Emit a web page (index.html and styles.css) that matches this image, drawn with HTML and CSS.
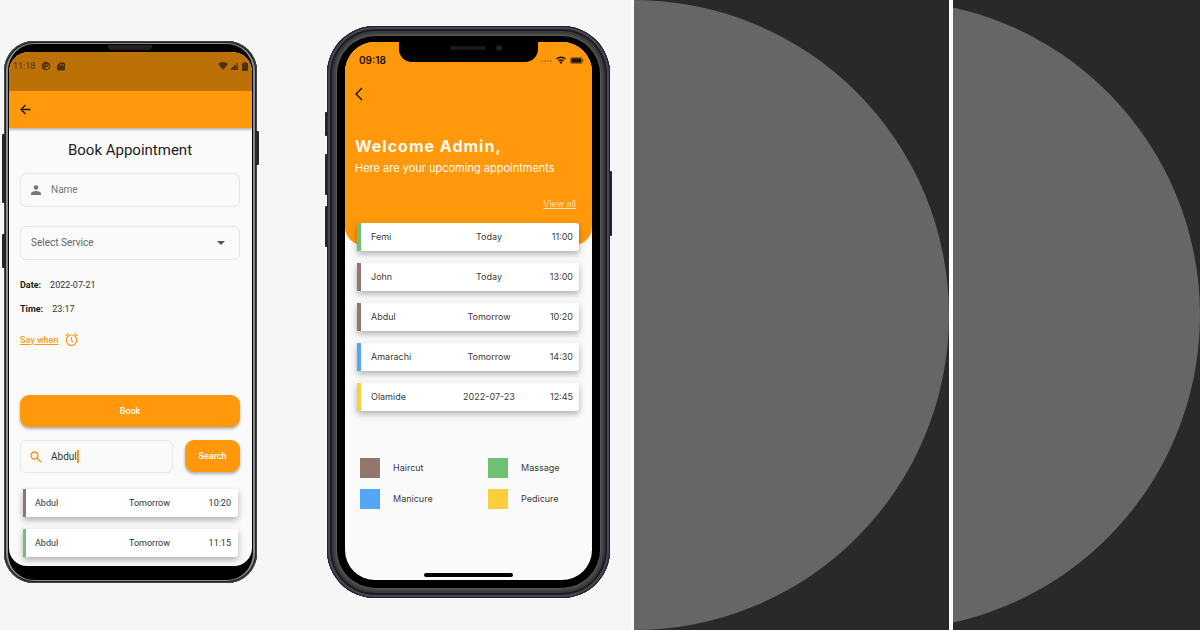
FILE: index.html
```html
<!DOCTYPE html>
<html lang="en">
<head>
<meta charset="utf-8">
<title>Salon booking app</title>
<link rel="stylesheet" href="styles.css">
</head>
<body>
<main class="showcase">
  <section class="devices">
    <div class="android">
      <span class="key key-al1"></span><span class="key key-al2"></span><span class="key key-ar"></span>
      <span class="earpiece"></span>
      <div class="android-screen">
        <div class="android-status">
          <span>11:18</span>
          <svg width="10" height="10" viewBox="0 0 20 20"><circle cx="10" cy="10" r="7.500" fill="none" stroke="#4c3110" stroke-width="2.400"/><path fill="#4c3110" fill-rule="evenodd" d="M5 3h6a4.500 4.500 0 0 1 0 9H9v5L5 15zM9 6v3h2a1.500 1.500 0 0 0 0-3z"/></svg>
          <svg width="8" height="9" viewBox="0 0 16 18"><path fill="#4c3110" fill-rule="evenodd" d="M6 1h8a2 2 0 0 1 2 2v12a2 2 0 0 1-2 2H2a2 2 0 0 1-2-2V7zM6 4v3h1.500V4zm3 0v3h1.500V4zm3 0v3h1.500V4z"/></svg>
          <svg class="push" width="10" height="8" viewBox="0 0 20 16"><path fill="#4c3110" d="M10 16 0 4a15 15 0 0 1 20 0z"/></svg>
          <svg width="8" height="8" viewBox="0 0 16 16"><path fill="#4c3110" opacity=".5" d="M0 16 16 0v16z"/><path fill="#4c3110" d="M0 16 11 5v11zM13 8h3v8h-3z"/></svg>
          <svg width="6" height="9" viewBox="0 0 12 18"><path fill="#4c3110" d="M4 0h4v2h3a1 1 0 0 1 1 1v14a1 1 0 0 1-1 1H1a1 1 0 0 1-1-1V3a1 1 0 0 1 1-1h3z"/></svg>
        </div>
        <div class="appbar">
          <button class="icon-button" aria-label="Back"><svg width="11" height="11" viewBox="0 0 22 22"><path d="M21 11H2M11 2l-9 9 9 9" fill="none" stroke="#24180a" stroke-width="2.600"/></svg></button>
        </div>
        <form class="booking">
          <h1>Book Appointment</h1>
          <label class="field">
            <svg width="10" height="10" viewBox="0 0 20 20"><circle cx="10" cy="5" r="4.600" fill="#777"/><path fill="#777" d="M0 20v-3c0-3 6-5 10-5s10 2 10 5v3z"/></svg>
            <input class="field-input" type="text" placeholder="Name" aria-label="Name">
          </label>
          <div class="field service">
            <select class="field-select" aria-label="Select Service"><option>Select Service</option></select>
            <svg width="8" height="4" viewBox="0 0 8 4"><path fill="#555" d="M0 0h8L4 4z"/></svg>
          </div>
          <p class="fact"><b>Date:</b><span>2022-07-21</span></p>
          <p class="fact"><b>Time:</b><span>23:17</span></p>
          <p class="when"><a href="#when">Say when</a>
            <svg width="13" height="13" viewBox="0 0 26 26" fill="none" stroke="#f79a1c" stroke-width="2.400"><circle cx="13" cy="14.500" r="10.500"/><path d="M13 8v7l4 3M1 6l6-5M25 6l-6-5"/></svg></p>
          <button class="primary" type="button">Book</button>
          <div class="search-row">
            <label class="field search">
              <svg width="12" height="12" viewBox="0 0 24 24" fill="none" stroke="#f2941c" stroke-width="2.800"><circle cx="9" cy="9" r="7"/><path d="m14 14 8.500 8.500"/></svg>
              <input class="field-query" type="text" value="Abdul" size="1" aria-label="Search by name"><span class="caret"></span>
            </label>
            <button class="primary" type="button">Search</button>
          </div>
          <ul class="slots">
            <li class="slot haircut"><span>Abdul</span><span class="day">Tomorrow</span><span class="hour">10:20</span></li>
            <li class="slot massage"><span>Abdul</span><span class="day">Tomorrow</span><span class="hour">11:15</span></li>
          </ul>
        </form>
      </div>
    </div>

    <div class="iphone">
      <span class="key key-il1"></span><span class="key key-il2"></span><span class="key key-il3"></span><span class="key key-ir"></span>
      <div class="iphone-screen">
        <div class="notch"><span class="speaker"></span><span class="lens"></span></div>
        <header class="hero">
          <div class="iphone-status">
            <b>09:18</b>
            <svg class="push" width="11" height="3" viewBox="0 0 11 3"><path stroke="#b97516" stroke-width="1.500" stroke-dasharray="2 1" d="M0 2h11"/></svg>
            <svg width="10" height="8" viewBox="0 0 20 16" fill="none" stroke="#1c1206" stroke-width="3"><path d="M1 6a13 13 0 0 1 18 0M5 10a8 8 0 0 1 10 0"/><path fill="#1c1206" stroke="none" d="m10 16-3-3.500a4 4 0 0 1 6 0z"/></svg>
            <svg width="14" height="7" viewBox="0 0 28 14"><rect x=".8" y=".8" width="24" height="12.400" rx="3" fill="none" stroke="#7d4d0c" stroke-width="1.500"/><rect x="2.500" y="2.500" width="20.500" height="9" rx="1.500" fill="#1c1206"/><path fill="#7d4d0c" d="M26 5c2 0 2 4 0 4z"/></svg>
          </div>
          <button class="icon-button" aria-label="Back"><svg width="8" height="14" viewBox="0 0 8 14"><path d="M7 1 1 7l6 6" fill="none" stroke="#24180a" stroke-width="1.500"/></svg></button>
          <h2>Welcome Admin,</h2>
          <p>Here are your upcoming appointments</p>
          <a class="view-all" href="#all">View all</a>
        </header>
        <ul class="slots upcoming">
          <li class="slot massage"><span>Femi</span><span class="day">Today</span><span class="hour">11:00</span></li>
          <li class="slot haircut"><span>John</span><span class="day">Today</span><span class="hour">13:00</span></li>
          <li class="slot haircut"><span>Abdul</span><span class="day">Tomorrow</span><span class="hour">10:20</span></li>
          <li class="slot manicure"><span>Amarachi</span><span class="day">Tomorrow</span><span class="hour">14:30</span></li>
          <li class="slot pedicure"><span>Olamide</span><span class="day">2022-07-23</span><span class="hour">12:45</span></li>
        </ul>
        <ul class="legend">
          <li class="haircut">Haircut</li>
          <li class="massage">Massage</li>
          <li class="manicure">Manicure</li>
          <li class="pedicure">Pedicure</li>
        </ul>
        <div class="home-bar"></div>
      </div>
    </div>
  </section>
  <section class="panel"><svg viewBox="0 0 315 630" preserveAspectRatio="xMinYMid slice"><circle cx="0" cy="315" r="315" fill="#666"/></svg></section>
  <section class="panel divided"><svg viewBox="0 0 247 630" preserveAspectRatio="xMaxYMid slice"><circle cx="-68" cy="315" r="315" fill="#666"/></svg></section>
</main>
</body>
</html>
```
FILE: styles.css
```css
* { box-sizing: border-box; }

body, h1, h2, p, ul { margin: 0; padding: 0; }
ul { list-style: none; }
svg { flex: none; display: block; }
button, input, select { font: inherit; color: inherit; border: 0; background: none; padding: 0; outline: 0; }

.showcase {
  display: grid;
  grid-template-columns: 634fr 315fr 251fr;
  min-height: 100vh;
}

.devices {
  display: grid;
  grid-template-columns: 253fr 283fr;
  align-items: center;
  gap: 70px;
  padding: 0 20px 6px 4px;
  background: #f6f6f6;
  border-right: 4px solid #fbfbfb;
}

.panel { background: #292929; overflow: hidden; display: flex; }
.panel svg { width: 100%; height: 100%; }
.divided { border-left: 4px solid #fff; }

.haircut { --tone: #92776b; }
.massage { --tone: #6fc073; }
.manicure { --tone: #52a6f4; }
.pedicure { --tone: #fdce3b; }

.key { position: absolute; width: 3px; background: #25252a; border-radius: 1px; }
.key-al1 { left: -2px; top: 93px; height: 69px; }
.key-al2 { left: -2px; top: 193px; height: 34px; }
.key-ar { right: -2px; top: 90px; height: 34px; }
.key-il1 { left: -2px; top: 86px; height: 24px; }
.key-il2 { left: -2px; top: 128px; height: 41px; }
.key-il3 { left: -2px; top: 180px; height: 41px; }
.key-ir { right: -2px; top: 145px; height: 65px; }

/* Android phone */
.android {
  position: relative;
  padding: 11px 5px 17px;
  border-radius: 30px;
  background: #000;
  box-shadow: inset 0 0 0 1px #444, inset 0 0 0 2px #222, inset 0 0 0 3px #8c8c8c, inset 2px 0 0 2px #8c8c8c, inset -2px 0 0 2px #8c8c8c;
  font: 9px/12px Roboto, sans-serif;
  color: #333;
}
.earpiece {
  position: absolute;
  top: 4px;
  left: 104px;
  width: 44px;
  height: 5px;
  border-radius: 0 0 4px 4px;
  background: #241f1f;
}
.android-screen {
  border-radius: 20px 20px 18px 18px;
  overflow: hidden;
  background: #fafafa;
}
.android-status {
  display: flex;
  align-items: center;
  gap: 6px;
  height: 39px;
  padding: 0 4px 11px;
  background: #bc7107;
  color: #4c3110;
  font-size: 9px;
}
.android-status .push { margin-right: -4px; }
.android-status svg:last-child { margin-left: -2px; }
.push { margin-left: auto; }
.icon-button { display: flex; }
.appbar {
  position: relative;
  display: flex;
  align-items: center;
  height: 37px;
  padding-left: 11px;
  background: #ff980a;
  box-shadow: 0 2px 2px rgba(0, 0, 0, .25);
}
.booking {
  display: flex;
  flex-direction: column;
  padding: 12px 12px 9px 11px;
}
.booking h1 {
  font-size: 15px;
  line-height: 20px;
  font-weight: 400;
  text-align: center;
  color: #222;
  margin-bottom: 13px;
}
.field {
  display: flex;
  align-items: center;
  height: 34px;
  padding: 0 10px;
  border: 1px solid #e6e6e6;
  border-radius: 6px;
  font-size: 10px;
  color: #666;
}
.field-input { flex: 1; min-width: 0; margin-left: 10px; }
.field-input::placeholder { color: #777; opacity: 1; }
.service { margin: 19px 0; padding-right: 14px; }
.field-select { appearance: none; flex: 1; }
.fact { display: flex; gap: 9px; margin-bottom: 12px; }
.fact b { color: #1c1c1c; }
.when {
  display: flex;
  align-items: center;
  gap: 7px;
  margin: 6px 0 49px;
}
.when a { color: #f79a1c; font-weight: 500; }
.primary {
  height: 32px;
  border-radius: 9px;
  background: #ff980a;
  box-shadow: 0 2px 3px rgba(0, 0, 0, .3);
  color: #fff;
  font-weight: 500;
}
.search-row {
  display: grid;
  grid-template-columns: 153fr 55fr;
  gap: 12px;
  margin: 13px 0 16px;
}
.search { height: 33px; padding: 0 9px; color: #333; }
.field-query { width: 26px; margin-left: 9px; }
.caret { flex: none; width: 2px; height: 13px; background: #f2941c; }

.slots { display: grid; gap: 12px; }
.booking .slots { margin: 0 2px 0 3px; }
.slot {
  display: grid;
  grid-template-columns: 41fr 36fr 24fr;
  align-items: center;
  height: 28px;
  padding: 0 7px 0 9px;
  border-left: 3px solid var(--tone);
  border-radius: 0 3px 3px 0;
  background: #fff;
  box-shadow: 0 3px 6px rgba(0, 0, 0, .3);
}
.day { text-align: center; }
.hour { text-align: right; }

/* iPhone */
.iphone {
  position: relative;
  padding: 16px 18px 18px;
  border-radius: 48px;
  background: #000;
  box-shadow:
    inset 0 0 0 1px #24232c,
    inset 0 0 0 3px #474653,
    inset 0 0 0 5px #1c1c22,
    inset 0 0 0 7px #39393b,
    inset 0 0 0 9px #464646,
    inset 0 0 0 10px #575757;
  font: 9px/12px Inter, sans-serif;
  color: #3a3a3a;
}
.iphone-screen {
  position: relative;
  border-radius: 30px;
  overflow: hidden;
  background: #fafafa;
}
.notch {
  position: absolute;
  top: 0;
  left: 54px;
  right: 54px;
  height: 20px;
  border-radius: 0 0 13px 13px;
  background: #000;
}
.speaker {
  position: absolute;
  top: 4px;
  left: 51px;
  width: 36px;
  height: 4px;
  border-radius: 2px;
  background: #1d1717;
}
.lens {
  position: absolute;
  top: 3px;
  left: 97px;
  width: 6px;
  height: 6px;
  border-radius: 50%;
  background: #102638;
}
.hero {
  display: flex;
  flex-direction: column;
  align-items: flex-start;
  padding: 12px 10px 35px;
  border-radius: 0 0 18px 18px;
  background: #ff980a;
  color: #fffaf0;
}
.iphone-status {
  display: flex;
  align-items: center;
  align-self: stretch;
  gap: 4px;
  padding: 0 0 0 4px;
  margin-right: -2px;
  color: #1c1206;
  font-size: 10px;
}
.iphone-status b { font-weight: 600; }
.hero .icon-button { margin: 21px 0 36px; }
.hero h2 {
  font-size: 16px;
  line-height: 18px;
  font-weight: 700;
  letter-spacing: 1px;
}
.hero p { font-size: 11px; line-height: 14px; margin: 6px 0 23px; }
.view-all {
  align-self: flex-end;
  margin-right: 6px;
  color: #ffe3b0;
  line-height: 12px;
}
.upcoming { position: relative; margin: -22px 13px 0 12px; }
.upcoming .slot { padding: 0 6px 0 10px; border-left-width: 4px; }
.legend {
  display: grid;
  grid-template-columns: 1fr 1fr;
  gap: 11px 0;
  margin: 47px -24px 64px 15px;
}
.legend li { display: flex; align-items: center; gap: 13px; }
.legend li::before { content: ""; width: 20px; height: 20px; background: var(--tone); }
.home-bar {
  width: 36%;
  height: 4px;
  margin: 0 auto 3px;
  border-radius: 2px;
  background: #000;
}
```
